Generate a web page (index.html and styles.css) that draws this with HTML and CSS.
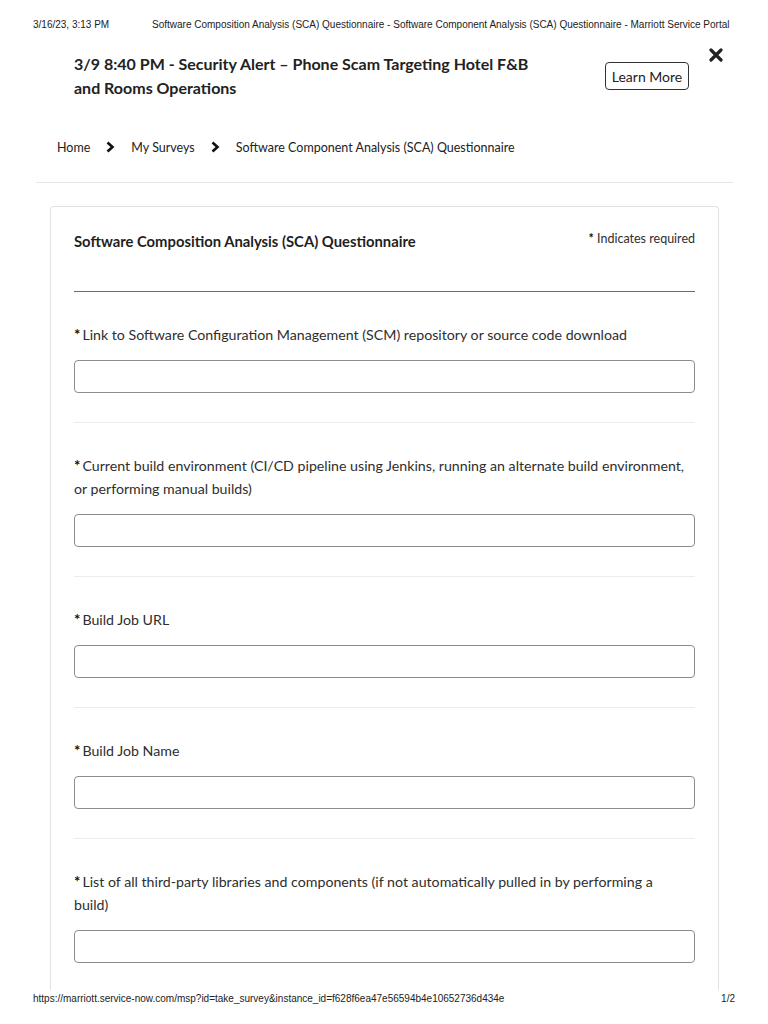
FILE: index.html
```html
<!DOCTYPE html>
<html lang="en">
<head>
<meta charset="utf-8">
<title>Software Composition Analysis (SCA) Questionnaire</title>
<link rel="stylesheet" href="styles.css">
</head>
<body>
<div class="print-head">
  <span class="ph-date">3/16/23, 3:13 PM</span>
  <span class="ph-title">Software Composition Analysis (SCA) Questionnaire - Software Component Analysis (SCA) Questionnaire - Marriott Service Portal</span>
</div>

<div class="page">
  <div class="alert">
    <div class="alert-text">3/9 8:40 PM - Security Alert – Phone Scam Targeting Hotel F&amp;B and Rooms Operations</div>
    <button class="learn">Learn More</button>
    <svg class="close" viewBox="0 0 14 14" width="14" height="14" aria-hidden="true"><path d="M2 2 L12 12 M12 2 L2 12" stroke="#222" stroke-width="3.2" stroke-linecap="round"/></svg>
  </div>

  <nav class="crumbs">
    <span>Home</span>
    <svg class="chev" viewBox="0 0 10 12" width="10" height="12"><path d="M2.5 1.5 L7.5 6 L2.5 10.5" fill="none" stroke="#111" stroke-width="2.6"/></svg>
    <span>My Surveys</span>
    <svg class="chev" viewBox="0 0 10 12" width="10" height="12"><path d="M2.5 1.5 L7.5 6 L2.5 10.5" fill="none" stroke="#111" stroke-width="2.6"/></svg>
    <span>Software Component Analysis (SCA) Questionnaire</span>
  </nav>
  <hr class="rule">

  <div class="card">
    <div class="card-head">
      <h1 class="card-title">Software Composition Analysis (SCA) Questionnaire</h1>
      <span class="req"><span class="star">*</span> Indicates required</span>
    </div>
    <div class="dark-line"></div>

    <div class="q">
      <label class="q-label">Link to Software Configuration Management (SCM) repository or source code download</label>
      <input class="field" type="text">
    </div>
    <div class="q">
      <label class="q-label">Current build environment (CI/CD pipeline using Jenkins, running an alternate build environment, or performing manual builds)</label>
      <input class="field" type="text">
    </div>
    <div class="q">
      <label class="q-label">Build Job URL</label>
      <input class="field" type="text">
    </div>
    <div class="q">
      <label class="q-label">Build Job Name</label>
      <input class="field" type="text">
    </div>
    <div class="q last">
      <label class="q-label">List of all third-party libraries and components (if not automatically pulled in by performing a build)</label>
      <input class="field" type="text">
    </div>
  </div>
</div>

<div class="print-foot">
  <span>https://marriott.service-now.com/msp?id=take_survey&amp;instance_id=f628f6ea47e56594b4e10652736d434e</span>
  <span>1/2</span>
</div>
</body>
</html>
```

FILE: styles.css
```css
html, body {
  margin: 0;
  padding: 0;
  background: #fff;
}
body {
  width: 768px;
  height: 1024px;
  overflow: hidden;
  position: relative;
  font-family: "Lato", "Open Sans", sans-serif;
  color: #2e2e2e;
}
.print-head {
  display: flex;
  align-items: center;
  padding: 17px 0 0 33px;
  height: 14px;
  font-family: "Liberation Sans", Arial, sans-serif;
  font-size: 10px;
  color: #222;
}
.ph-date { width: 119px; }
.page {
  padding: 0 35px 0 36px;
}
.alert {
  display: flex;
  align-items: flex-start;
  padding: 21px 0 0 38px;
  height: 60px;
}
.alert-text {
  width: 472px;
  font-weight: 700;
  font-size: 16px;
  line-height: 24px;
  color: #222;
}
.learn {
  margin: 10px 0 0 59px;
  font-family: inherit;
  font-size: 14px;
  color: #222;
  background: #fff;
  border: 1px solid #333;
  border-radius: 4px;
  padding: 0;
  height: 28px;
  width: 84px;
  white-space: nowrap;
}
.close {
  margin: -4px 0 0 20px;
}
.crumbs {
  display: flex;
  align-items: center;
  padding: 25px 0 0 21px;
  font-size: 12.5px;
  color: #222;
  height: 20px;
}
.chev { margin: 0 16px 0 15px; }
.rule {
  border: 0;
  border-top: 1px solid #e6e6e6;
  margin: 25px 0 0 0;
}
.card {
  margin: 23px 14px 0 14px;
  border: 1px solid #e2e2e2;
  border-bottom: 0;
  border-radius: 4px 4px 0 0;
  padding: 0 23px;
  height: 800px;
}
.card-head {
  display: flex;
  justify-content: space-between;
  align-items: flex-start;
  padding-top: 24px;
  height: 60px;
}
.card-title {
  margin: 0;
  font-size: 14.8px;
  font-weight: 700;
  color: #1f1f1f;
  line-height: 20px;
}
.req {
  font-size: 12.5px;
  color: #2e2e2e;
  line-height: 16px;
}
.star { font-weight: 700; color: #111; }
.dark-line {
  border-top: 1px solid #6b6b6b;
}
.q {
  padding: 31px 0 29px 0;
  border-bottom: 1px solid #ececec;
}
.q.last { border-bottom: 0; }
.q-label {
  display: block;
  font-size: 14.2px;
  line-height: 23px;
  color: #2e2e2e;
  margin-bottom: 14px;
  padding-right: 9px;
}
.q-label::before {
  content: "*";
  font-size: 15px;
  font-weight: 700;
  color: #111;
  margin-right: 2px;
}
.field {
  display: block;
  box-sizing: border-box;
  width: 100%;
  height: 33px;
  border: 1px solid #8c8c8c;
  border-radius: 4px;
  margin: 0;
  background: #fff;
}
.print-foot {
  position: absolute;
  left: 0;
  right: 0;
  top: 990px;
  display: flex;
  justify-content: space-between;
  padding: 3px 33px 0 33px;
  font-family: "Liberation Sans", Arial, sans-serif;
  font-size: 10px;
  color: #222;
  background: #fff;
  height: 34px;
}
```
